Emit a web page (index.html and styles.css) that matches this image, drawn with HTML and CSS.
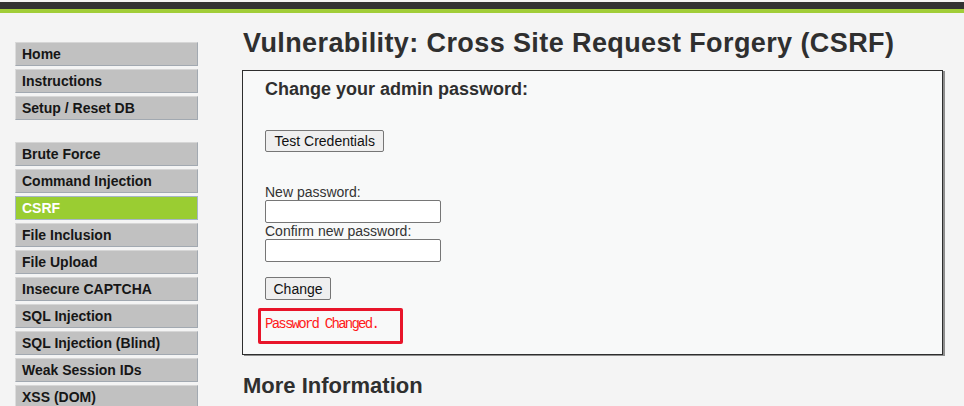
FILE: index.html
```html
<!DOCTYPE html>
<html lang="en">
<head>
<meta charset="utf-8">
<title>Vulnerability: Cross Site Request Forgery (CSRF)</title>
<link rel="stylesheet" href="styles.css">
</head>
<body>
<div class="topbar"><div class="topbar-dark"></div><div class="topbar-green"></div></div>
<div class="layout">
  <nav class="menu">
    <ul class="menu-group">
      <li class="menu-item">Home</li>
      <li class="menu-item">Instructions</li>
      <li class="menu-item">Setup / Reset DB</li>
    </ul>
    <ul class="menu-group">
      <li class="menu-item">Brute Force</li>
      <li class="menu-item">Command Injection</li>
      <li class="menu-item menu-item-selected">CSRF</li>
      <li class="menu-item">File Inclusion</li>
      <li class="menu-item">File Upload</li>
      <li class="menu-item">Insecure CAPTCHA</li>
      <li class="menu-item">SQL Injection</li>
      <li class="menu-item">SQL Injection (Blind)</li>
      <li class="menu-item">Weak Session IDs</li>
      <li class="menu-item">XSS (DOM)</li>
    </ul>
  </nav>
  <main class="content">
    <h1 class="page-title">Vulnerability: Cross Site Request Forgery (CSRF)</h1>
    <div class="vuln-box">
      <h3 class="box-title">Change your admin password:</h3>
      <button class="btn btn-test" type="button">Test Credentials</button>
      <form class="pw-form">
        <label class="field-label">New password:</label>
        <input class="field-input" type="password">
        <label class="field-label">Confirm new password:</label>
        <input class="field-input" type="password">
        <button class="btn btn-change" type="button">Change</button>
      </form>
      <div class="result"><pre class="result-text">Password Changed.</pre></div>
    </div>
    <h2 class="section-title">More Information</h2>
  </main>
</div>
</body>
</html>
```
FILE: styles.css
```css
html, body {
  margin: 0;
  padding: 0;
  overflow: hidden;
}
body {
  background: #f4f4f4;
  font-family: "Liberation Sans", Arial, sans-serif;
  color: #2f2f2f;
}
.topbar {
  padding-top: 2px;
}
.topbar-dark {
  height: 7px;
  background: #323232;
}
.topbar-green {
  height: 4px;
  background: #a1cd38;
}
.layout {
  display: flex;
  align-items: flex-start;
}
.menu {
  width: 183px;
  margin-left: 15px;
  padding-top: 29px;
}
.menu-group {
  list-style: none;
  margin: 0 0 22px 0;
  padding: 0;
  display: flex;
  flex-direction: column;
  gap: 3px;
}
.menu-item {
  box-sizing: border-box;
  height: 24px;
  line-height: 22px;
  padding-left: 6px;
  background: #c1c1c1;
  border-top: 1px solid #d6d6d6;
  border-left: 1px solid #dcdcdc;
  border-right: 1px solid #a2a9b1;
  border-bottom: 1px solid #a2a9b1;
  font-size: 14px;
  font-weight: bold;
  color: #161616;
  white-space: nowrap;
}
.menu-item-selected {
  background: #9acd32;
  color: #ffffff;
  border-color: #a6b6c6;
}
.content {
  margin-left: 44px;
  padding-top: 15px;
}
.page-title {
  margin: 0 0 12px 0;
  padding-left: 1px;
  font-size: 27px;
  letter-spacing: 0.4px;
  line-height: 30px;
  font-weight: bold;
  color: #2f2f2f;
  white-space: nowrap;
}
.vuln-box {
  box-sizing: border-box;
  width: 701px;
  height: 285px;
  background: #f8f9f9;
  border: 1px solid #2e2e2e;
  box-shadow: 2px 1px 0 #8e8e8e;
  padding: 8px 22px 0 22px;
}
.box-title {
  margin: 0;
  font-size: 18px;
  line-height: 21px;
  font-weight: bold;
  color: #2f2f2f;
}
.btn {
  font-family: "Liberation Sans", Arial, sans-serif;
  font-size: 14px;
  color: #111;
  background: #efefef;
  border: 1px solid #767676;
  border-radius: 2px;
  height: 22px;
  padding: 0 8.5px;
  line-height: 20px;
}
.btn-test {
  display: block;
  margin-top: 30px;
}
.pw-form {
  display: flex;
  flex-direction: column;
  align-items: flex-start;
  margin-top: 32px;
}
.field-label {
  font-size: 14px;
  line-height: 16px;
  color: #333;
}
.field-input {
  box-sizing: border-box;
  width: 176px;
  height: 23px;
  margin: 0;
  background: #fff;
  border: 1px solid #767676;
  border-radius: 2px;
}
.btn-change {
  margin-top: 15px;
  padding: 0 7.5px;
  height: 23px;
}
.result {
  display: inline-block;
  margin: 8px 0 0 -7px;
  width: 145px;
  height: 36px;
  box-sizing: border-box;
  border: 3px solid #e8152a;
  border-radius: 2px;
  padding: 4px 0 0 4px;
}
.result-text {
  margin: 0;
  font-family: "Liberation Mono", "Courier New", monospace;
  font-size: 14px;
  line-height: 18px;
  letter-spacing: -1.75px;
  color: #ff1a1a;
}
.section-title {
  margin: 18px 0 0 0;
  padding-left: 1px;
  font-size: 22px;
  line-height: 25px;
  font-weight: bold;
  color: #2f2f2f;
}
```
